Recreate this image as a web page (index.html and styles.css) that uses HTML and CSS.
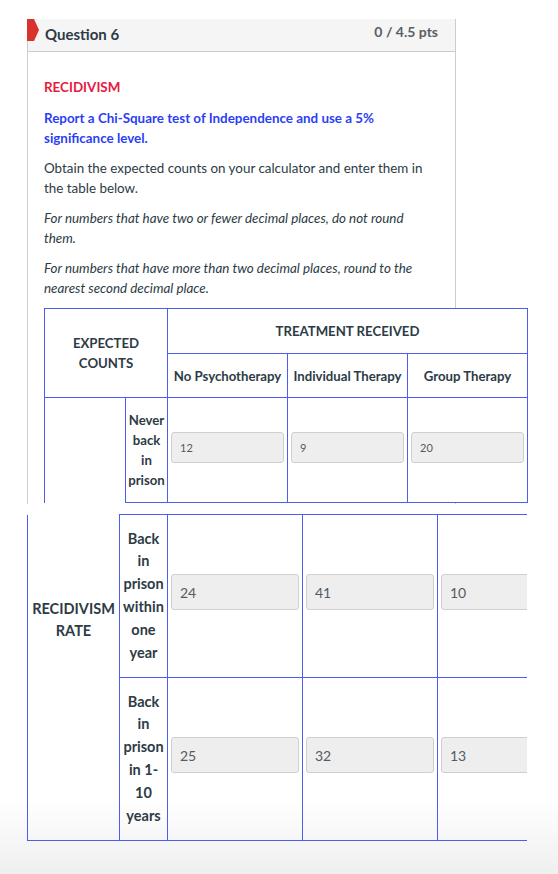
FILE: index.html
```html
<!DOCTYPE html>
<html>
<head>
<meta charset="utf-8">
<link rel="stylesheet" href="styles.css">
</head>
<body>
<section class="top">
  <div class="card">
    <div class="header">
      <svg class="flag" width="12" height="22" viewBox="0 0 12 22"><polygon points="0,0 7,0 12,11 7,22 0,22" fill="#d9312b"/></svg>
      <span class="qtitle">Question 6</span>
      <span class="pts">0 / 4.5 pts</span>
    </div>
    <div class="content">
      <p class="red">RECIDIVISM</p>
      <p class="blue">Report a Chi-Square test of Independence and use a 5% significance level.</p>
      <p>Obtain the expected counts on your calculator and enter them in the table below.</p>
      <p class="it">For numbers that have two or fewer decimal places, do not round them.</p>
      <p class="it">For numbers that have more than two decimal places, round to the nearest second decimal place.</p>
      <table class="grid gtop">
        <colgroup><col class="c1"><col class="c2"><col class="c3"><col class="c3"><col class="c3"></colgroup>
        <tr class="r1"><th colspan="2" rowspan="2">EXPECTED<br>COUNTS</th><th colspan="3">TREATMENT RECEIVED</th></tr>
        <tr class="r2"><th>No Psychotherapy</th><th>Individual Therapy</th><th>Group Therapy</th></tr>
        <tr class="r3"><td class="open"></td><th class="lbl">Never back in prison</th><td><input class="in" value="12"></td><td><input class="in" value="9"></td><td><input class="in" value="20"></td></tr>
      </table>
    </div>
  </div>
</section>
<section class="bottom">
  <div class="clip">
    <table class="grid gbot">
      <colgroup><col class="b1"><col class="b2"><col class="b3"><col class="b3"><col class="b3"></colgroup>
      <tr class="br"><th rowspan="2" class="rate">RECIDIVISM<br>RATE</th><th class="lbl">Back in prison within one year</th><td><input class="in" value="24"></td><td><input class="in" value="41"></td><td><input class="in" value="10"></td></tr>
      <tr class="br"><th class="lbl">Back in prison in 1-10 years</th><td><input class="in" value="25"></td><td><input class="in" value="32"></td><td><input class="in" value="13"></td></tr>
    </table>
  </div>
</section>
</body>
</html>
```
FILE: styles.css
```css
html {
  background: linear-gradient(to bottom, #ffffff 0, #ffffff 800px, #efefef 874px) no-repeat;
  min-height: 874px;
}
body {
  margin: 0;
  font-family: Lato, "Open Sans", sans-serif;
  color: #2d3b45;
}
.top {
  height: 504px;
  overflow: hidden;
  padding: 19px 0 0 27px;
  box-sizing: border-box;
}
.card {
  width: 427px;
  height: 485px;
  border-left: 1px solid #c7cdd1;
  border-right: 1px solid #c7cdd1;
}
.header {
  position: relative;
  height: 33px;
  box-sizing: border-box;
  background: #f5f5f5;
  border-bottom: 1px solid #c7cdd1;
  display: flex;
  align-items: center;
  justify-content: space-between;
  padding: 0 17px 2px 17px;
}
.flag {
  position: absolute;
  left: -1px;
  top: 0;
}
.qtitle {
  font-size: 15px;
  font-weight: 700;
  color: #2d3b45;
}
.pts {
  font-size: 14px;
  font-weight: 700;
  color: #5a5f63;
  margin-top: -5px;
}
.content {
  padding: 25px 20px 0 16px;
}
.content p {
  margin: 0 0 10px;
  font-size: 13.4px;
  line-height: 20px;
}
.content p.red {
  color: #e8193f;
  font-weight: 700;
  margin-bottom: 11px;
}
.content p.blue {
  color: #2c3ff4;
  font-weight: 700;
}
.content p.it {
  font-style: italic;
}
.grid {
  border-collapse: collapse;
  table-layout: fixed;
  background: transparent;
}
.grid th, .grid td {
  border: 1px solid #4d5cf2;
  padding: 0 3px;
  text-align: center;
  vertical-align: middle;
  font-weight: 700;
}
.gtop {
  width: 483px;
  margin-top: 1px;
  background: #fff;
  font-size: 13.2px;
  line-height: 20px;
}
.gtop .c1 { width: 81px; }
.gtop .c2 { width: 42px; }
.gtop .c3 { width: 120px; }
.gtop .r1 th { height: 44px; }
.gtop .r2 th { height: 43px; }
.gtop .r3 th { height: 104px; }
.gtop .r3 td { height: 98px; padding-bottom: 6px; }
.gtop .lbl { padding: 0 2px; }
.gtop td.open { border-bottom: none; }
.gtop .in {
  height: 31px;
  font-size: 11px;
}
.in {
  width: 100%;
  box-sizing: border-box;
  background: #eeeeee;
  border: 1px solid #cfcfcf;
  border-radius: 3px;
  color: #555b60;
  font-family: Lato, "Open Sans", sans-serif;
  padding: 0 8px;
  display: block;
}
.bottom {
  padding: 10px 0 0 27px;
}
.clip {
  width: 500px;
  overflow: hidden;
}
.gbot {
  width: 545px;
  font-size: 14.5px;
  line-height: 22.8px;
}
.gbot .b1 { width: 92px; }
.gbot .b2 { width: 48px; }
.gbot .b3 { width: 135px; }
.gbot .br th { height: 162px; }
.gbot .br td { height: 154px; padding-bottom: 8px; }
.gbot .lbl { padding: 0 2px; }
.gbot .rate {
  border-top: none;
  vertical-align: top;
  padding: 83px 0 0;
}
.gbot .in {
  height: 36px;
  font-size: 14px;
}
```
